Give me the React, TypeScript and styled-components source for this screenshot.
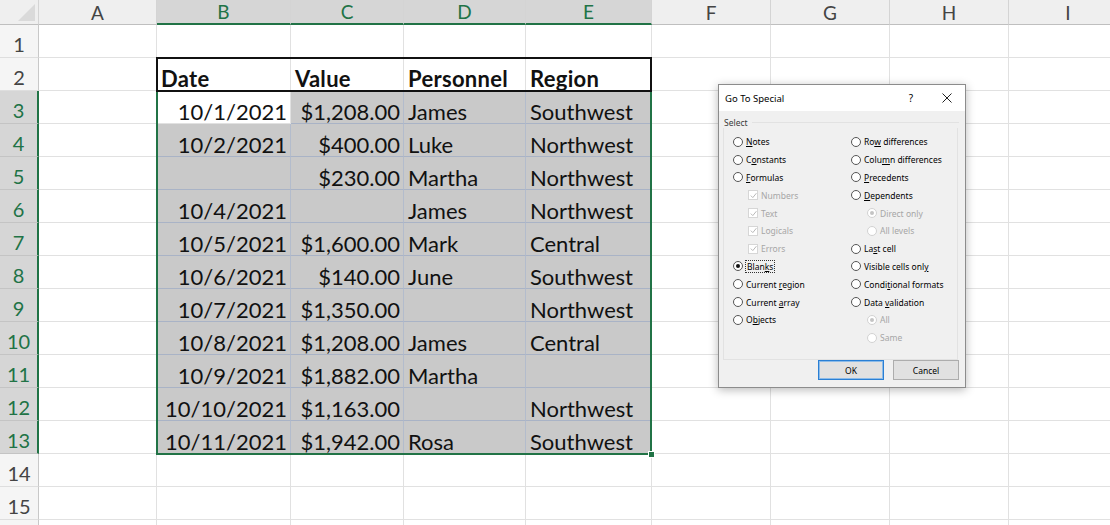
import React from "react";
import styled, { createGlobalStyle } from "styled-components";

// Constants
const GREEN = "#217346";
const LETTERS = ["A", "B", "C", "D", "E", "F", "G", "H", "I"];
const ROW_COUNT = 15;

type Row = [string, string, string, string];

const header: Row = ["Date", "Value", "Personnel", "Region"];

const data: Row[] = [
  ["10/1/2021", "$1,208.00", "James", "Southwest"],
  ["10/2/2021", "$400.00", "Luke", "Northwest"],
  ["", "$230.00", "Martha", "Northwest"],
  ["10/4/2021", "", "James", "Northwest"],
  ["10/5/2021", "$1,600.00", "Mark", "Central"],
  ["10/6/2021", "$140.00", "June", "Southwest"],
  ["10/7/2021", "$1,350.00", "", "Northwest"],
  ["10/8/2021", "$1,208.00", "James", "Central"],
  ["10/9/2021", "$1,882.00", "Martha", ""],
  ["10/10/2021", "$1,163.00", "", "Northwest"],
  ["10/11/2021", "$1,942.00", "Rosa", "Southwest"],
];

// Styles
const GlobalStyle = createGlobalStyle`
  html, body {
    margin: 0;
    padding: 0;
    background: #fff;
    overflow: hidden;
  }
`;

const Sheet = styled.div`
  position: relative;
  display: grid;
  grid-template-columns: 39px 118px 134px 113px 122px 126px 119px 119px 119px 119px;
  grid-template-rows: 25px repeat(${ROW_COUNT + 1}, 33px);
  width: 1110px;
  height: 525px;
  overflow: hidden;
  font-family: Lato, "Liberation Sans", sans-serif;
`;

const Corner = styled.div`
  grid-row: 1;
  grid-column: 1;
  position: relative;
  background: #efefef;
  border-right: 1px solid #d4d4d4;
  border-bottom: 1px solid #bfbfbf;
  &::after {
    content: "";
    position: absolute;
    right: 3px;
    bottom: 3px;
    border-left: 17px solid transparent;
    border-bottom: 17px solid #dadada;
  }
`;

const ColHead = styled.div<{ $c: number; $sel?: boolean }>`
  grid-row: 1;
  grid-column: ${(p) => p.$c};
  display: flex;
  align-items: center;
  justify-content: center;
  box-sizing: border-box;
  font-size: 19px;
  color: ${(p) => (p.$sel ? GREEN : "#444")};
  background: ${(p) => (p.$sel ? "#d6d6d6" : "#efefef")};
  border-right: 1px solid #d4d4d4;
  border-bottom: ${(p) => (p.$sel ? `2px solid ${GREEN}` : "1px solid #bfbfbf")};
`;

const RowHead = styled.div<{ $r: number; $sel?: boolean }>`
  grid-column: 1;
  grid-row: ${(p) => p.$r};
  display: flex;
  align-items: center;
  justify-content: center;
  box-sizing: border-box;
  padding-top: 5px;
  font-size: 20px;
  color: ${(p) => (p.$sel ? GREEN : "#444")};
  background: ${(p) => (p.$sel ? "#d6d6d6" : "#f5f5f5")};
  border-bottom: 1px solid ${(p) => (p.$sel ? "#c4c4c4" : "#dedede")};
  border-right: ${(p) => (p.$sel ? `2px solid ${GREEN}` : "1px solid #c8c8c8")};
`;

const Cell = styled.div<{ $r: number; $c: number; $fill?: "sel" | "active"; $bold?: boolean; $right?: boolean }>`
  grid-row: ${(p) => p.$r};
  grid-column: ${(p) => p.$c};
  display: flex;
  align-items: center;
  justify-content: ${(p) => (p.$right ? "flex-end" : "flex-start")};
  box-sizing: border-box;
  padding: 8px 3px 0 4px;
  white-space: nowrap;
  font-size: 22px;
  font-weight: ${(p) => (p.$bold ? 700 : 400)};
  letter-spacing: ${(p) => (p.$bold ? "0.3px" : "0")};
  color: #111;
  background: ${(p) => (p.$fill === "sel" ? "#c9c9c9" : "#fff")};
  border-right: 1px solid ${(p) => (p.$fill === "sel" ? "#b3bccc" : "#e1e1e1")};
  border-bottom: 1px solid ${(p) => (p.$fill === "sel" ? "#a9b3c6" : "#e1e1e1")};
`;

const HeaderBox = styled.div`
  grid-row: 3;
  grid-column: 3 / 7;
  margin: -1px 0 -1px -1px;
  border: 2px solid #111;
  z-index: 3;
  pointer-events: none;
`;

const Selection = styled.div`
  grid-row: 4 / 15;
  grid-column: 3 / 7;
  position: relative;
  margin: -1px 0 -1px -1px;
  border: 2px solid ${GREEN};
  z-index: 2;
  pointer-events: none;
`;

const FillHandle = styled.span`
  position: absolute;
  right: -5px;
  bottom: -5px;
  width: 5px;
  height: 5px;
  background: ${GREEN};
  border: 1px solid #fff;
`;

// Dialog
const Dialog = styled.div`
  position: absolute;
  left: 718px;
  top: 84px;
  width: 248px;
  height: 304px;
  box-sizing: border-box;
  display: flex;
  flex-direction: column;
  background: #f0f0f0;
  border: 1px solid #8c8c8c;
  box-shadow: 0 2px 9px rgba(0, 0, 0, 0.28);
  font-family: "Noto Sans", "Open Sans", sans-serif;
  color: #000;
  z-index: 10;
`;

const TitleBar = styled.div`
  display: flex;
  align-items: center;
  height: 26px;
  background: #fff;
  padding-left: 6px;
  font-size: 9.5px;
`;

const Title = styled.span`
  flex: 1;
`;

const TitleButton = styled.span`
  width: 36px;
  height: 26px;
  display: flex;
  align-items: center;
  justify-content: center;
  font-size: 10px;
`;

const Body = styled.div`
  flex: 1;
  display: flex;
  flex-direction: column;
  padding: 5px 6px 7px 4px;
`;

const Group = styled.div`
  position: relative;
  border: 1px solid #e2e2e2;
  border-top: none;
  margin-right: 1px;
`;

const GroupLabel = styled.div`
  display: flex;
  align-items: center;
  gap: 4px;
  height: 12px;
  font-size: 8.5px;
  color: #3a3a3a;
  padding-left: 1px;
  &::after {
    content: "";
    flex: 1;
    border-top: 1px solid #e2e2e2;
  }
`;

const Columns = styled.div`
  display: flex;
  padding: 5px 0 12px 9px;
`;

const Column = styled.div<{ $w?: number }>`
  display: flex;
  flex-direction: column;
  width: ${(p) => (p.$w ? `${p.$w}px` : "auto")};
`;

const Item = styled.div<{ $indent?: number; $off?: boolean }>`
  display: flex;
  align-items: center;
  gap: 3px;
  height: 17.8px;
  padding-left: ${(p) => p.$indent || 0}px;
  font-size: 8.5px;
  color: ${(p) => (p.$off ? "#a6a6a6" : "#000")};
  u {
    text-decoration-thickness: 1px;
    text-underline-offset: 1px;
  }
`;

const Radio = styled.span<{ $on?: boolean; $off?: boolean }>`
  position: relative;
  width: 10px;
  height: 10px;
  box-sizing: border-box;
  border-radius: 50%;
  background: #fff;
  border: 1px solid ${(p) => (p.$off ? "#d2d2d2" : "#555")};
  &::after {
    content: "";
    display: ${(p) => (p.$on ? "block" : "none")};
    position: absolute;
    left: 2px;
    top: 2px;
    width: 4px;
    height: 4px;
    border-radius: 50%;
    background: ${(p) => (p.$off ? "#c4c4c4" : "#111")};
  }
`;

const CheckBox = styled.span`
  width: 10px;
  height: 10px;
  box-sizing: border-box;
  border: 1px solid #d6d6d6;
  background: #fff;
  display: flex;
  align-items: center;
  justify-content: center;
`;

const Focus = styled.span`
  outline: 1px dotted #333;
  outline-offset: 0px;
  padding: 0 1px;
`;

const Buttons = styled.div`
  margin-top: auto;
  display: flex;
  justify-content: flex-end;
  gap: 9px;
`;

const Button = styled.div<{ $primary?: boolean }>`
  width: 66px;
  height: 20px;
  box-sizing: border-box;
  display: flex;
  align-items: center;
  justify-content: center;
  font-size: 8.5px;
  background: #e1e1e1;
  border: 1px solid ${(p) => (p.$primary ? "#2a7fd4" : "#adadad")};
  box-shadow: ${(p) => (p.$primary ? "inset 0 0 0 1px #8cbbe8" : "none")};
`;

// Parts
type Opt = { label: React.ReactNode; kind: "radio" | "check"; on?: boolean; off?: boolean; indent?: number; focus?: boolean };

const acc = (before: string, key: string, after: string) => (
  <>
    {before}
    <u>{key}</u>
    {after}
  </>
);

const leftOpts: Opt[] = [
  { label: acc("", "N", "otes"), kind: "radio" },
  { label: acc("C", "o", "nstants"), kind: "radio" },
  { label: acc("", "F", "ormulas"), kind: "radio" },
  { label: "Numbers", kind: "check", on: true, off: true, indent: 15 },
  { label: "Text", kind: "check", on: true, off: true, indent: 15 },
  { label: "Logicals", kind: "check", on: true, off: true, indent: 15 },
  { label: "Errors", kind: "check", on: true, off: true, indent: 15 },
  { label: acc("Blan", "k", "s"), kind: "radio", on: true, focus: true },
  { label: acc("Current ", "r", "egion"), kind: "radio" },
  { label: acc("Current ", "a", "rray"), kind: "radio" },
  { label: acc("O", "b", "jects"), kind: "radio" },
];

const rightOpts: Opt[] = [
  { label: acc("Ro", "w", " differences"), kind: "radio" },
  { label: acc("Colu", "m", "n differences"), kind: "radio" },
  { label: acc("", "P", "recedents"), kind: "radio" },
  { label: acc("", "D", "ependents"), kind: "radio" },
  { label: "Direct only", kind: "radio", on: true, off: true, indent: 16 },
  { label: "All levels", kind: "radio", off: true, indent: 16 },
  { label: acc("La", "s", "t cell"), kind: "radio" },
  { label: acc("Visible cells onl", "y", ""), kind: "radio" },
  { label: acc("Condi", "t", "ional formats"), kind: "radio" },
  { label: acc("Data ", "v", "alidation"), kind: "radio" },
  { label: "All", kind: "radio", on: true, off: true, indent: 16 },
  { label: "Same", kind: "radio", off: true, indent: 16 },
];

const Option = ({ opt }: { opt: Opt }) => (
  <Item $indent={opt.indent} $off={opt.off}>
    {opt.kind === "radio" ? (
      <Radio $on={opt.on} $off={opt.off} />
    ) : (
      <CheckBox>
        <svg width="7" height="7" viewBox="0 0 7 7">
          <path d="M0.8 3.6 L2.8 5.6 L6.4 1.2" fill="none" stroke="#b9b9b9" strokeWidth="1" />
        </svg>
      </CheckBox>
    )}
    {opt.focus ? <Focus>{opt.label}</Focus> : <span>{opt.label}</span>}
  </Item>
);

const GoToSpecial = () => (
  <Dialog>
    <TitleBar>
      <Title>Go To Special</Title>
      <TitleButton>?</TitleButton>
      <TitleButton>
        <svg width="10" height="10" viewBox="0 0 10 10">
          <path d="M0.5 0.5 L9.5 9.5 M9.5 0.5 L0.5 9.5" stroke="#222" strokeWidth="1" />
        </svg>
      </TitleButton>
    </TitleBar>
    <Body>
      <GroupLabel>Select</GroupLabel>
      <Group>
        <Columns>
          <Column $w={118}>
            {leftOpts.map((o, i) => (
              <Option key={i} opt={o} />
            ))}
          </Column>
          <Column>
            {rightOpts.map((o, i) => (
              <Option key={i} opt={o} />
            ))}
          </Column>
        </Columns>
      </Group>
      <Buttons>
        <Button $primary>OK</Button>
        <Button>Cancel</Button>
      </Buttons>
    </Body>
  </Dialog>
);

const App = () => {
  const cells: React.ReactNode[] = [];
  for (let r = 1; r <= ROW_COUNT + 1; r++) {
    const gr = r + 1;
    for (let c = 0; c < LETTERS.length; c++) {
      const gc = c + 2;
      const inTable = c >= 1 && c <= 4;
      let text = "";
      let fill: "sel" | "active" | undefined;
      if (inTable && r === 2) text = header[c - 1];
      if (inTable && r >= 3 && r <= 13) {
        text = data[r - 3][c - 1];
        fill = r === 3 && c === 1 ? "active" : "sel";
      }
      cells.push(
        <Cell key={`${r}-${c}`} $r={gr} $c={gc} $fill={fill} $bold={r === 2} $right={r > 2 && (c === 1 || c === 2)}>
          {text}
        </Cell>
      );
    }
  }

  return (
    <>
      <GlobalStyle />
      <Sheet>
        <Corner />
        {LETTERS.map((l, i) => (
          <ColHead key={l} $c={i + 2} $sel={i >= 1 && i <= 4}>
            {l}
          </ColHead>
        ))}
        {Array.from({ length: ROW_COUNT + 1 }, (_, i) => (
          <RowHead key={i} $r={i + 2} $sel={i + 1 >= 3 && i + 1 <= 13}>
            {i < ROW_COUNT ? i + 1 : ""}
          </RowHead>
        ))}
        {cells}
        <HeaderBox />
        <Selection>
          <FillHandle />
        </Selection>
        <GoToSpecial />
      </Sheet>
    </>
  );
};

export default App;
